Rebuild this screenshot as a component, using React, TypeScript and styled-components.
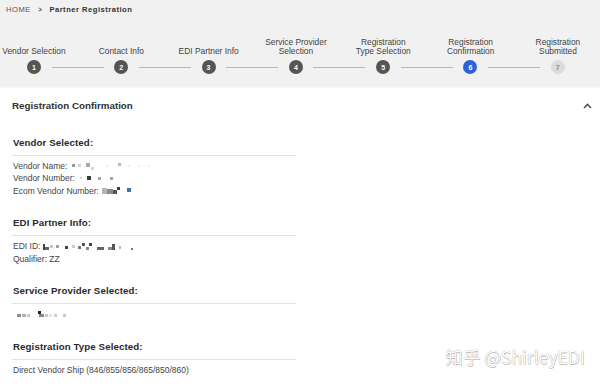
import React from "react";
import styled, { createGlobalStyle } from "styled-components";

const Global = createGlobalStyle`
  html, body { margin: 0; padding: 0; background: #ffffff; }
  body { font-family: "Liberation Sans", Arial, sans-serif; color: #333; }
  * { box-sizing: border-box; }
`;

const Page = styled.div`
  position: relative;
  width: 600px;
  height: 388px;
  overflow: hidden;
  background: #fff;
  display: flex;
  flex-direction: column;
`;

const Header = styled.header`
  height: 88px;
  background: #f1f1f1;
  border-bottom: 1px solid #f6f6f6;
  display: flex;
  flex-direction: column;
  flex: none;
`;

const Breadcrumb = styled.nav`
  margin-top: 5px;
  padding-left: 6px;
  height: 10px;
  display: flex;
  align-items: center;
  gap: 7px;
  font-size: 7.6px;
  line-height: 10px;
  letter-spacing: 0.5px;
`;

const Crumb = styled.span<{ $current?: boolean }>`
  color: ${(p) => (p.$current ? "#333" : "#555")};
  font-weight: ${(p) => (p.$current ? 700 : 400)};
`;

const CrumbSep = styled.span`
  font-weight: 700;
  color: #444;
  font-size: 7px;
  transform: scaleX(0.8);
`;

const LabelRow = styled.div`
  margin-top: 23px;
  margin-left: -9.7px;
  height: 17px;
  display: grid;
  grid-template-columns: repeat(7, 87.33px);
  align-items: end;
`;

const StepLabel = styled.div`
  text-align: center;
  font-size: 8.4px;
  line-height: 8.5px;
  color: #444;
`;

const IndicatorRow = styled.div`
  margin-top: 5px;
  padding-left: 27px;
  height: 14px;
  display: flex;
  align-items: center;
`;

type StepState = "done" | "active" | "todo";

const Circle = styled.div<{ $state: StepState }>`
  width: 14px;
  height: 14px;
  border-radius: 50%;
  flex: none;
  display: flex;
  align-items: center;
  justify-content: center;
  font-size: 7px;
  font-weight: 700;
  color: ${(p) => (p.$state === "todo" ? "#8a8a8a" : "#fff")};
  background: ${(p) =>
    p.$state === "active" ? "#2d62d8" : p.$state === "done" ? "#555" : "#dcdcdc"};
`;

const Connector = styled.div`
  flex: none;
  width: 52px;
  height: 1px;
  margin: 0 10.65px;
  background: #b8b8b8;
`;

const Panel = styled.main`
  flex: 1;
  padding: 12px 6px 0 12px;
  display: flex;
  flex-direction: column;
`;

const PanelHead = styled.div`
  display: flex;
  align-items: center;
  justify-content: space-between;
  height: 12px;
`;

const PanelTitle = styled.h1`
  margin: 0;
  font-size: 9.8px;
  line-height: 12px;
  font-weight: 700;
  color: #333;
`;

const Sections = styled.div`
  margin-top: 24.5px;
  width: 284px;
  display: flex;
  flex-direction: column;
  gap: 20px;
`;

const Section = styled.section`
  display: flex;
  flex-direction: column;
`;

const SectionTitle = styled.h2`
  margin: 0 0 6px 1px;
  font-size: 9.7px;
  line-height: 12px;
  font-weight: 700;
  letter-spacing: 0.1px;
  color: #2a2a2a;
`;

const Divider = styled.hr`
  margin: 0;
  border: none;
  height: 1px;
  background: #e3e3e3;
`;

const Lines = styled.div`
  padding: 4px 0 0 1px;
  display: flex;
  flex-direction: column;
`;

const Line = styled.div`
  font-size: 8.5px;
  line-height: 12.5px;
  height: 12.5px;
  color: #444;
  display: flex;
  align-items: center;
  white-space: nowrap;
`;

const Chevron = () => (
  <svg width="9" height="6" viewBox="0 0 9 6" style={{ marginRight: 2 }}>
    <polyline points="1,5 4.5,1.5 8,5" fill="none" stroke="#555" strokeWidth="1.6" />
  </svg>
);

type Cell = [number, number, number, number, string];

const Redacted = ({ width, cells }: { width: number; cells: Cell[] }) => (
  <svg width={width} height="9" viewBox={`0 0 ${width} 9`} style={{ marginLeft: 3 }}>
    {cells.map(([x, y, w, h, c], i) => (
      <rect key={i} x={x} y={y} width={w} height={h} fill={c} />
    ))}
  </svg>
);

const Watermark = styled.div`
  position: absolute;
  right: 15px;
  top: 346px;
  font-family: "Noto Sans CJK SC", "Liberation Sans", sans-serif;
  font-size: 17.5px;
  line-height: 22px;
  color: #fff;
  text-shadow: 0 0 1px rgba(0, 0, 0, 0.45), 0.5px 0.5px 0.5px rgba(0, 0, 0, 0.2);
  white-space: nowrap;
`;

const steps: { label: React.ReactNode; state: StepState }[] = [
  { label: "Vendor Selection", state: "done" },
  { label: "Contact Info", state: "done" },
  { label: "EDI Partner Info", state: "done" },
  { label: <>Service Provider<br />Selection</>, state: "done" },
  { label: <>Registration<br />Type Selection</>, state: "done" },
  { label: <>Registration<br />Confirmation</>, state: "active" },
  { label: <>Registration<br />Submitted</>, state: "todo" },
];

export default function App() {
  return (
    <>
      <Global />
      <Page>
        <Header>
          <Breadcrumb>
            <Crumb>HOME</Crumb>
            <CrumbSep>&gt;</CrumbSep>
            <Crumb $current>Partner Registration</Crumb>
          </Breadcrumb>
          <LabelRow>
            {steps.map((s, i) => (
              <StepLabel key={i}>{s.label}</StepLabel>
            ))}
          </LabelRow>
          <IndicatorRow>
            {steps.map((s, i) => (
              <React.Fragment key={i}>
                <Circle $state={s.state}>{i + 1}</Circle>
                {i < steps.length - 1 && <Connector />}
              </React.Fragment>
            ))}
          </IndicatorRow>
        </Header>
        <Panel>
          <PanelHead>
            <PanelTitle>Registration Confirmation</PanelTitle>
            <Chevron />
          </PanelHead>
          <Sections>
            <Section>
              <SectionTitle>Vendor Selected:</SectionTitle>
              <Divider />
              <Lines>
                <Line>
                  Vendor Name:
                  <Redacted
                    width={85}
                    cells={[
                      [2, 3, 3, 3, "#9a9a9a"],
                      [8, 3, 3, 3, "#c9d6e6"],
                      [16, 2, 4, 4, "#a8a8a8"],
                      [21, 6, 3, 3, "#d8d8d8"],
                      [36, 4, 2, 2, "#e6e6e6"],
                      [48, 2, 3, 3, "#b9b9b9"],
                      [58, 4, 2, 2, "#ececec"],
                      [68, 4, 2, 2, "#eeeeee"],
                      [78, 4, 2, 2, "#efefef"],
                    ]}
                  />
                </Line>
                <Line>
                  Vendor Number:
                  <Redacted
                    width={40}
                    cells={[
                      [2, 3, 2, 2, "#d6d6d6"],
                      [9, 2, 4, 4, "#3a3a3a"],
                      [20, 3, 3, 3, "#a5a5a5"],
                      [32, 3, 3, 3, "#a5a5a5"],
                    ]}
                  />
                </Line>
                <Line>
                  Ecom Vendor Number:
                  <Redacted
                    width={36}
                    cells={[
                      [0, 2, 5, 6, "#b5b5b5"],
                      [5, 3, 6, 5, "#8a8a8a"],
                      [11, 4, 4, 4, "#555"],
                      [15, 1, 3, 3, "#3a3a3a"],
                      [25, 2, 4, 4, "#3f73a8"],
                    ]}
                  />
                </Line>
              </Lines>
            </Section>
            <Section>
              <SectionTitle>EDI Partner Info:</SectionTitle>
              <Divider />
              <Lines>
                <Line>
                  EDI ID:
                  <Redacted
                    width={92}
                    cells={[
                      [0, 2, 2, 6, "#444"],
                      [2, 5, 4, 3, "#666"],
                      [7, 3, 3, 3, "#c8c8c8"],
                      [13, 3, 3, 3, "#a0a0a0"],
                      [22, 4, 3, 3, "#444"],
                      [29, 3, 3, 3, "#cfcfcf"],
                      [35, 4, 3, 3, "#777"],
                      [39, 1, 3, 3, "#555"],
                      [43, 5, 3, 3, "#8a8a8a"],
                      [46, 1, 3, 3, "#444"],
                      [54, 5, 7, 3, "#666"],
                      [65, 5, 4, 3, "#888"],
                      [69, 2, 3, 6, "#555"],
                      [76, 4, 2, 3, "#bbb"],
                      [88, 6, 2, 2, "#777"],
                    ]}
                  />
                </Line>
                <Line>Qualifier: ZZ</Line>
              </Lines>
            </Section>
            <Section>
              <SectionTitle>Service Provider Selected:</SectionTitle>
              <Divider />
              <Lines>
                <Line>
                  <Redacted
                    width={60}
                    cells={[
                      [-3, 4, 3, 3, "#b5b5b5"],
                      [1, 4, 4, 3, "#8f8f8f"],
                      [6, 4, 4, 3, "#b0b0b0"],
                      [11, 4, 3, 3, "#c8c8c8"],
                      [22, 1, 3, 3, "#222"],
                      [23, 4, 5, 3, "#888"],
                      [29, 4, 3, 3, "#c8c8c8"],
                      [33, 4, 3, 3, "#eee6c8"],
                      [38, 4, 3, 3, "#d0d0d0"],
                      [47, 4, 3, 3, "#c8c8c8"],
                    ]}
                  />
                </Line>
              </Lines>
            </Section>
            <Section>
              <SectionTitle>Registration Type Selected:</SectionTitle>
              <Divider />
              <Lines>
                <Line>Direct Vendor Ship (846/855/856/865/850/860)</Line>
              </Lines>
            </Section>
          </Sections>
        </Panel>
        <Watermark>知乎 @ShirleyEDI</Watermark>
      </Page>
    </>
  );
}
